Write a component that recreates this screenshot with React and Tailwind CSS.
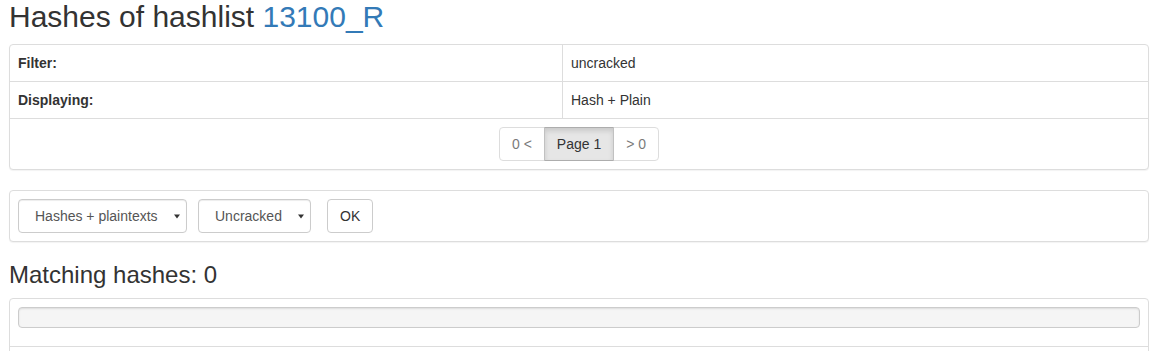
import React from 'react'

const INFO_ROWS = [
  { label: 'Filter:', value: 'uncracked' },
  { label: 'Displaying:', value: 'Hash + Plain' },
]

function Caret() {
  return (
    <svg width="6" height="5" viewBox="0 0 6 5" className="shrink-0">
      <path d="M0 0.5h6L3 4.5z" fill="#333" />
    </svg>
  )
}

function FakeSelect({ label, width }) {
  return (
    <div
      className={`${width} h-[34px] flex items-center justify-between pl-4 pr-[6px] border border-[#ccc] rounded bg-white text-[#555] shadow-[inset_0_1px_1px_rgba(0,0,0,0.075)]`}
    >
      <span>{label}</span>
      <Caret />
    </div>
  )
}

export default function App() {
  return (
    <div className="min-h-[351px] bg-white pl-[9px] pr-[10px] text-[14px] leading-[20px] text-[#333] font-['Liberation_Sans',Arial,sans-serif]">
      <h2 className="text-[30px] leading-[33px] mb-[11px]">
        Hashes of hashlist <a className="text-[#337ab7]">13100_R</a>
      </h2>

      <div className="border border-[#ddd] rounded bg-white shadow-[0_1px_1px_rgba(0,0,0,0.05)] mb-5">
        {INFO_ROWS.map((row, i) => (
          <div key={row.label} className={`flex ${i > 0 ? 'border-t border-[#ddd]' : ''}`}>
            <div className="w-[553px] shrink-0 p-2 font-bold border-r border-[#ddd]">{row.label}</div>
            <div className="flex-1 p-2">{row.value}</div>
          </div>
        ))}
        <div className="border-t border-[#ddd] p-2 flex justify-center">
          <div className="flex">
            <span className="h-[34px] px-3 py-[6px] border border-[#ccc] rounded-l bg-white opacity-65">0 &lt;</span>
            <span className="h-[34px] px-3 py-[6px] border border-[#adadad] bg-[#e6e6e6] -ml-px shadow-[inset_0_3px_5px_rgba(0,0,0,0.125)]">
              Page 1
            </span>
            <span className="h-[34px] px-3 py-[6px] border border-[#ccc] rounded-r bg-white -ml-px opacity-65">&gt; 0</span>
          </div>
        </div>
      </div>

      <div className="border border-[#ddd] rounded bg-white shadow-[0_1px_1px_rgba(0,0,0,0.05)] p-2 flex items-center">
        <FakeSelect label="Hashes + plaintexts" width="w-[169px]" />
        <div className="ml-[11px]">
          <FakeSelect label="Uncracked" width="w-[113px]" />
        </div>
        <button className="ml-4 h-[34px] px-3 py-[6px] border border-[#ccc] rounded bg-white text-[#333]">OK</button>
      </div>

      <h3 className="text-[24px] leading-[26px] mt-5 mb-[10px]">Matching hashes: 0</h3>

      <div className="border border-[#ddd] rounded-t bg-white">
        <div className="p-2">
          <div className="h-[21px] border border-[#ccc] rounded bg-[#f5f5f5] shadow-[inset_0_1px_2px_rgba(0,0,0,0.1)]" />
        </div>
        <div className="mt-[10px] border-t border-[#ddd] h-10" />
      </div>
    </div>
  )
}
